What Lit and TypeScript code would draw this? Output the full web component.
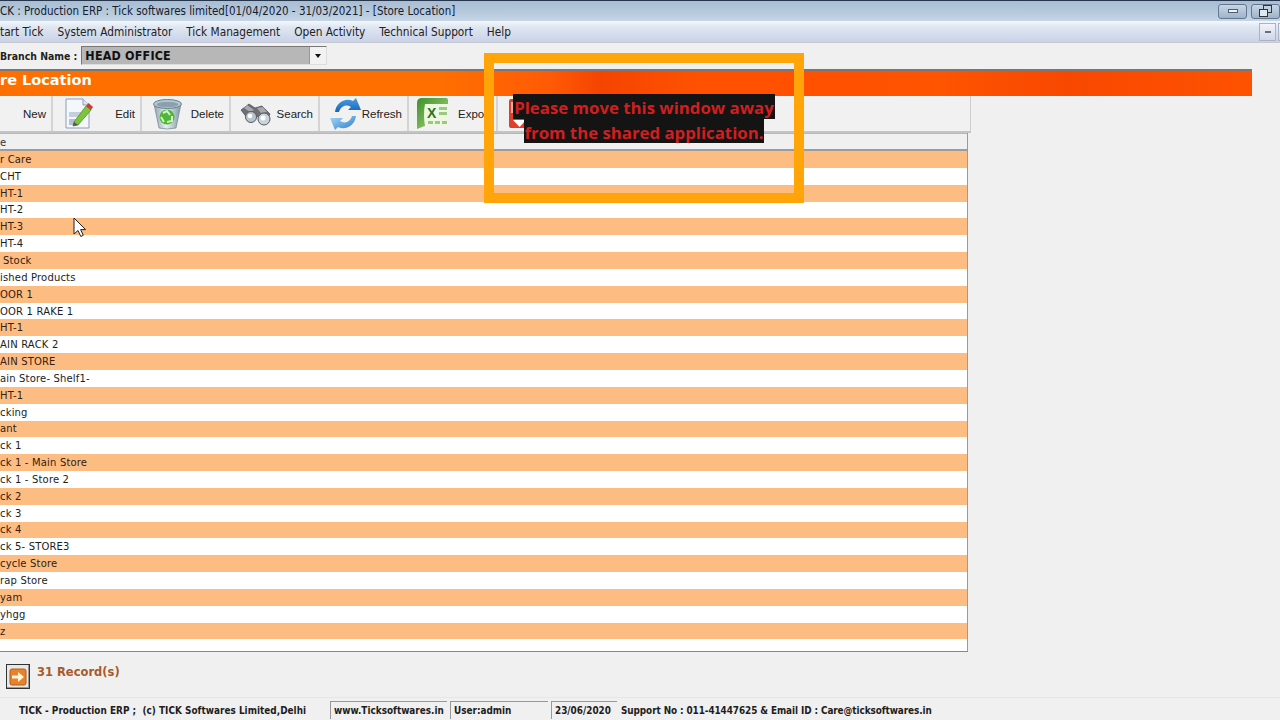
import { LitElement, html, css, svg } from "lit";
import { customElement } from "lit/decorators.js";

const ROWS: [string, number][] = [
  ["r Care", 0], ["CHT", 0], ["HT-1", 0], ["HT-2", 0], ["HT-3", 0], ["HT-4", 0],
  ["Stock", 3], ["ished Products", 0], ["OOR 1", 0], ["OOR 1 RAKE 1", 0], ["HT-1", 0],
  ["AIN RACK 2", 0], ["AIN STORE", 0], ["ain Store- Shelf1-", 0], ["HT-1", 0], ["cking", 0],
  ["ant", 0], ["ck 1", 0], ["ck 1 - Main Store", 0], ["ck 1 - Store 2", 0], ["ck 2", 0],
  ["ck 3", 0], ["ck 4", 0], ["ck 5- STORE3", 0], ["cycle Store", 0], ["rap Store", 0],
  ["yam", 0], ["yhgg", 0], ["z", 0],
];

const editIcon = svg`<svg width="28" height="31" viewBox="0 0 28 31">
  <path d="M1 1H18L24 7V30H1Z" fill="#f4f7fb" stroke="#8d9db8"/>
  <path d="M18 1V7H24" fill="#dfe6f0" stroke="#8d9db8"/>
  <rect x="4" y="14" width="17" height="5" fill="#c4cfe0"/>
  <rect x="4" y="21" width="10" height="6" fill="#b4c0d4"/>
  <path d="M9 24L21 8L26 12L13 27L8 28Z" fill="#7ec43c" stroke="#4f8f1e" stroke-width=".8"/>
  <path d="M21 8L23.5 5L28 9L26 12Z" fill="#d8343a"/>
  <path d="M8 28L9 24L13 27Z" fill="#555"/>
</svg>`;

const trashIcon = svg`<svg width="31" height="32" viewBox="0 0 31 32">
  <defs><linearGradient id="tg" x1="0" x2="1"><stop offset="0" stop-color="#8fa3ad"/><stop offset=".45" stop-color="#e8f0f2"/><stop offset="1" stop-color="#7f97a5"/></linearGradient></defs>
  <path d="M2 6L7 30Q15 32 24 30L29 6Z" fill="url(#tg)" stroke="#6f8592" stroke-width=".7"/>
  <ellipse cx="15.5" cy="6" rx="14" ry="4.5" fill="#b9c9d2" stroke="#64808f"/>
  <ellipse cx="15.5" cy="6.5" rx="11" ry="2.8" fill="#8aa0ad"/>
  <circle cx="15" cy="19" r="7.5" fill="#4fb53b"/>
  <path d="M11 15L15 13L18 17M20 18L20 23L15 24M12 24L9 19" fill="none" stroke="#d4f5c2" stroke-width="2"/>
</svg>`;

const binocularIcon = svg`<svg width="32" height="24" viewBox="0 0 32 24">
  <path d="M1 8L9 2L15 6L22 4L30 12L26 20L15 13L8 17Z" fill="#6d6f75" stroke="#44464c" stroke-width=".7"/>
  <path d="M7 3L14 8L10 10L4 6Z" fill="#a8aab0"/>
  <path d="M17 6L23 5L27 10L21 11Z" fill="#a8aab0"/>
  <circle cx="11" cy="15" r="5.5" fill="#b9c4cd" stroke="#555b63"/>
  <circle cx="24" cy="17" r="6" fill="#c8d3da" stroke="#555b63"/>
  <circle cx="10" cy="14" r="2.3" fill="#fff"/>
  <circle cx="23" cy="16" r="2.5" fill="#fff"/>
</svg>`;

const refreshIcon = svg`<svg width="31" height="32" viewBox="0 0 31 32">
  <defs><linearGradient id="rg" x1="0" y1="0" x2="0" y2="1"><stop offset="0" stop-color="#4a9ee0"/><stop offset="1" stop-color="#1a64b8"/></linearGradient>
  <linearGradient id="rg2" x1="0" y1="0" x2="1" y2="1"><stop offset="0" stop-color="#a8d8f8"/><stop offset="1" stop-color="#2a7cc8"/></linearGradient></defs>
  <path d="M5 14C6 5 15 -1 23 3L26 0L31 12L18 12L21 9C16 6 11 8 9 14Z" fill="url(#rg)"/>
  <path d="M26 18C25 27 16 33 8 29L5 32L0 20L13 20L10 23C15 26 20 24 22 18Z" fill="url(#rg2)"/>
</svg>`;

const excelIcon = svg`<svg width="32" height="33" viewBox="0 0 32 33">
  <defs><linearGradient id="xg" x1="0" y1="0" x2="1" y2="1"><stop offset="0" stop-color="#3f8f2e"/><stop offset=".6" stop-color="#7fbc5a"/><stop offset="1" stop-color="#c4e2aa"/></linearGradient></defs>
  <path d="M5 1H29Q31 1 31 3V28H10L0 32V6Q0 1 5 1Z" fill="url(#xg)"/>
  <path d="M8 7H31V29H8Q6 18 8 7Z" fill="#eef7e2"/>
  <text x="10" y="21" font-family="Liberation Sans" font-size="14" font-weight="700" fill="#2a7420">X</text>
  <rect x="22" y="10" width="8" height="3" fill="#9cc882"/><rect x="22" y="15" width="8" height="3" fill="#9cc882"/>
  <rect x="11" y="24" width="5" height="3" fill="#9cc882"/><rect x="18" y="24" width="5" height="3" fill="#9cc882"/><rect x="25" y="24" width="5" height="3" fill="#9cc882"/>
</svg>`;

const redIcon = svg`<svg width="26" height="32" viewBox="0 0 26 32">
  <path d="M1 3Q1 1 3 1H25V30H3Q1 30 1 28Z" fill="#e0402a"/>
  <rect x="3" y="4" width="14" height="11" fill="#f7b0a0"/>
  <path d="M5 22H18L11.5 29Z" fill="#fff"/>
</svg>`;

const TOOLS = [
  { label: "Edit", icon: editIcon, cls: "t-edit" },
  { label: "Delete", icon: trashIcon, cls: "" },
  { label: "Search", icon: binocularIcon, cls: "t-search" },
  { label: "Refresh", icon: refreshIcon, cls: "" },
  { label: "Expo", icon: excelIcon, cls: "last" },
];

@customElement("app-root")
export class AppRoot extends LitElement {
  static styles = css`
    :host {
      display: block; position: relative; width: 1280px; height: 720px; overflow: hidden;
      background: #f0f0f0; font-family: "DejaVu Sans", sans-serif; color: #111;
    }
    .title {
      height: 21px; flex: none; box-sizing: border-box; display: flex; align-items: center; justify-content: space-between;
      background: linear-gradient(#a9bdd3, #b7cade 60%, #c5d6e6); border-top: 1px solid #25364c;
      font-family: "DejaVu Sans Condensed", "DejaVu Sans", sans-serif; font-stretch: condensed; font-size: 11.5px; color: #16202c;
    }
    .winbtns { display: flex; gap: 4px; }
    .winbtn {
      width: 29px; height: 15px; box-sizing: border-box; border: 1px solid #65778c; border-radius: 3px;
      background: linear-gradient(#c6d6e6, #9fb3c9); display: flex; align-items: center; justify-content: center;
    }
    .winbtn i { display: block; width: 10px; height: 4px; background: #eef3f8; border: 1px solid #4d5c6e; box-sizing: border-box; }
    .menu {
      height: 22px; flex: none; box-sizing: border-box; display: flex; align-items: center; gap: 14px;
      background: linear-gradient(#f4f8fb, #dfe6f1 30%, #c9d2e7); border-bottom: 1px solid #c6c7d0;
      font-family: "DejaVu Sans Condensed", "DejaVu Sans", sans-serif; font-stretch: condensed; font-size: 11.75px; color: #222;
    }
    .mdi { margin-left: auto; display: flex; gap: 2px; align-self: flex-start; padding-top: 2px; }
    .mdi span { width: 17px; height: 18px; box-sizing: border-box; border: 1px solid #aab4c8; background: linear-gradient(#f2f4fa, #ced6e6); display: flex; align-items: center; justify-content: center; }
    .mdi span:last-child { width: 2px; border-right: 0; }
    .mdi i { display: block; width: 6px; height: 2px; background: #66707e; }
    .branch { height: 26px; flex: none; box-sizing: border-box; padding-bottom: 1px; display: flex; align-items: center; gap: 4px; font-family: "DejaVu Sans Condensed", "DejaVu Sans", sans-serif; font-stretch: condensed; font-size: 10.4px; font-weight: 700; color: #222; }
    .combo {
      width: 246px; height: 19px; box-sizing: border-box; display: flex; align-items: center; justify-content: space-between;
      background: #b7b7b7; border: 1px solid #777; border-right-color: #ddd; border-bottom-color: #ddd;
      font-size: 12.4px; letter-spacing: .2px; font-weight: 700; color: #111; padding-left: 3px;
    }
    .combo b { width: 16px; height: 17px; background: #f2f2f2; border-left: 1px solid #999; display: flex; align-items: center; justify-content: center; }
    .combo b::after { content: ""; border: 3.5px solid transparent; border-top: 4px solid #111; border-bottom: 0; }
    .band {
      width: 1252px; height: 25px; flex: none; border-top: 2px solid #777; box-sizing: content-box; display: flex; align-items: flex-start;
      background: linear-gradient(90deg, #ff6f00 0, #ff6f00 35%, #ff5a05 44%, #f54400 48%, #ff5200 56%, #ff5000 63%, #ff5400 75%, #f84800 85%, #ff5200 100%);
      font-size: 14.5px; line-height: 19px; font-weight: 700; color: #fff;
    }
    .toolbar {
      width: 971px; height: 37px; flex: none; box-sizing: border-box; display: flex; border-right: 1px solid #ccc; border-bottom: 2px solid #c4c4c4;
      background: #f1f1f1; font-family: "Liberation Sans", sans-serif; font-size: 11.5px; color: #222;
    }
    .tool { width: 89px; box-sizing: border-box; display: flex; align-items: center; justify-content: space-between; padding: 0 5px 0 10px; border-right: 2px solid #d4d4d4; }
    .tool.first { width: 53px; justify-content: flex-end; }
    .tool.t-edit { padding-left: 12px; }
    .tool.t-search { padding-left: 9px; }
    .tool.last { justify-content: flex-start; gap: 9px; padding-left: 8px; }
    .tool.red { border: 0; padding-left: 10px; width: auto; }
    .grid { width: 968px; height: 519px; flex: none; box-sizing: border-box; border-right: 1px solid #9a9a9a; border-bottom: 1px solid #888; background: #fff; display: flex; flex-direction: column; overflow: hidden; }
    .ghead { height: 18px; flex: none; box-sizing: border-box; background: #f0f0f0; border-top: 1px solid #b8b8b8; border-bottom: 2px solid #9c9c9c; font-size: 10px; line-height: 17px; color: #333; }
    .row { height: 16.85px; flex: none; display: flex; align-items: center; font-size: 10px; letter-spacing: .17px; color: #1c1c1c; white-space: pre; overflow: hidden; background: #fff; }
    .row:nth-child(even) { background: #fdbd82; color: #33200f; }
    .recs { height: 45px; flex: none; display: flex; align-items: center; gap: 7px; padding: 0 0 0 6px; }
    .recbtn { width: 24px; height: 25px; box-sizing: border-box; border: 1px solid #333; background: #e8e8e8; display: flex; align-items: center; justify-content: center; box-shadow: inset -1px -1px 0 #999; position: relative; top: 2px; }
    .recs span { font-size: 11.5px; font-weight: 700; color: #a65a2c; position: relative; top: -3px; }
    .status { flex: none; height: 22px; box-sizing: border-box; display: flex; align-items: stretch; font-family: "DejaVu Sans Condensed", "DejaVu Sans", sans-serif; font-stretch: condensed; font-size: 9.9px; font-weight: 700; color: #1d1d1d; border-top: 1px solid #e6e6e6; padding-left: 19px; white-space: pre; }
    .status > div { display: flex; align-items: center; box-sizing: border-box; margin-top: 3px; }
    .s1 { width: 311px; letter-spacing: .03px; }
    .status > .cell { border-left: 1px solid #999; border-top: 1px solid #999; padding-left: 3px; margin-right: 3px; }
    .c1 { width: 117px; } .c2 { width: 98px; } .status > .c3 { width: 66px; margin-right: 4px; }
    .support { letter-spacing: -.08px; }
    .main { display: flex; flex-direction: column; height: 720px; }
    .over { position: absolute; }
    .frame { left: 484px; top: 53px; width: 320px; height: 150px; box-sizing: border-box; border: 10px solid #ffa50a; }
    .warn { left: 484px; top: 94px; width: 320px; display: flex; flex-direction: column; align-items: center; font-family: "Open Sans", sans-serif; font-weight: 700; font-size: 16.8px; color: #cf1f1f; }
    .warn span { display: block; height: 24.5px; line-height: 28px; background: #141414; white-space: pre; padding: 0 1px; }
    .cursor { left: 73px; top: 217px; }
  `;

  render() {
    return html`
      <div class="main">
        <div class="title">
          <span>CK : Production ERP : Tick softwares limited[01/04/2020 - 31/03/2021] - [Store Location]</span>
          <div class="winbtns">
            <div class="winbtn"><i></i></div>
            <div class="winbtn">
              <svg width="13" height="12" viewBox="0 0 13 12"><rect x="4.5" y=".5" width="8" height="7" fill="#c0d0e0" stroke="#333"/><rect x=".5" y="4.5" width="8" height="7" fill="#dfe8f0" stroke="#333"/></svg>
            </div>
          </div>
        </div>
        <div class="menu">
          <span>tart Tick</span><span>System Administrator</span><span>Tick Management</span>
          <span>Open Activity</span><span>Technical Support</span><span>Help</span>
          <div class="mdi"><span><i></i></span><span></span></div>
        </div>
        <div class="branch"><span>Branch Name :</span>
          <div class="combo"><span>HEAD OFFICE</span><b></b></div>
        </div>
        <div class="band"><span>re Location</span></div>
        <div class="toolbar">
          <div class="tool first">New</div>
          ${TOOLS.map((t) => html`<div class="tool ${t.cls}">${t.icon}<span>${t.label}</span></div>`)}
          <div class="tool red">${redIcon}</div>
        </div>
        <div class="grid">
          <div class="ghead">e</div>
          ${ROWS.map(([t, x]) => html`<div class="row"><span style="margin-left:${x}px">${t}</span></div>`)}
        </div>
        <div class="recs">
          <div class="recbtn">
            <svg width="18" height="18" viewBox="0 0 18 18"><rect x="1" y="1" width="16" height="16" rx="2" fill="#e9822a" stroke="#b85c14"/><path d="M3 7.5H9V4L15 9L9 14V10.5H3Z" fill="#fff3d8"/></svg>
          </div>
          <span>31 Record(s)</span>
        </div>
        <div class="status">
          <div class="s1">TICK - Production ERP ;  (c) TICK Softwares Limited,Delhi</div>
          <div class="cell c1">www.Ticksoftwares.in</div>
          <div class="cell c2">User:admin</div>
          <div class="cell c3">23/06/2020</div>
          <div class="support">Support No : 011-41447625 &amp; Email ID : Care@ticksoftwares.in</div>
        </div>
      </div>
      <div class="over frame"></div>
      <div class="over warn"><span>Please move this window away</span><span>from the shared application.</span></div>
      <svg class="over cursor" width="14" height="21" viewBox="0 0 14 21"><path d="M1 1V17L5 13.5L7.8 19.5L10.3 18.3L7.6 12.6H12.6Z" fill="#fff" stroke="#222" stroke-width="1"/></svg>
    `;
  }
}
